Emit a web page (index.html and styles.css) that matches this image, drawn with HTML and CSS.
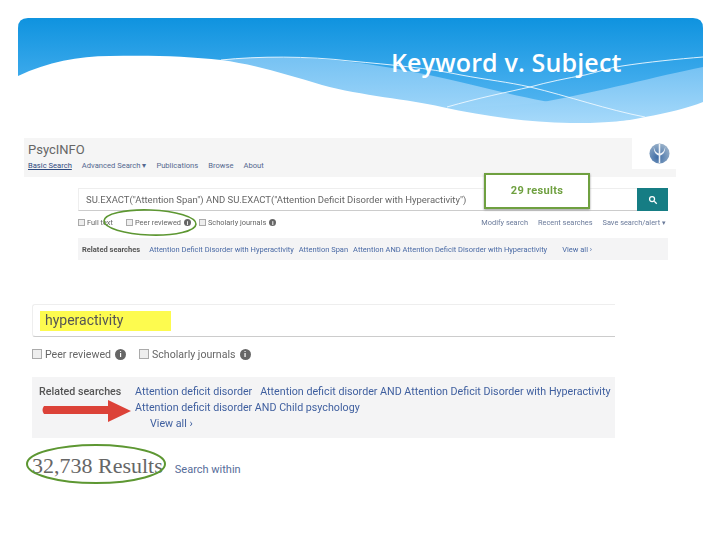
FILE: index.html
```html
<!DOCTYPE html>
<html lang="en">
<head>
  <meta charset="UTF-8" />
  <title>Keyword v. Subject</title>
  <link rel="stylesheet" href="styles.css">
</head>
<body>
  <div class="slide">

    <div class="banner">
      <svg class="banner-art" viewBox="0 0 685 105">
        <defs>
          <linearGradient id="sky" x1="0" y1="0" x2="0" y2="1">
            <stop offset="0" stop-color="#0f93df"/>
            <stop offset="0.6" stop-color="#3fabec"/>
            <stop offset="1" stop-color="#5fbaf2"/>
          </linearGradient>
          <linearGradient id="band" x1="0" y1="0" x2="0" y2="1">
            <stop offset="0" stop-color="#76c2f3"/>
            <stop offset="1" stop-color="#a6d9fa"/>
          </linearGradient>
        </defs>
        <path d="M0 10 Q0 0 10 0 H675 Q685 0 685 10 V105 H0 Z" fill="url(#sky)"/>
        <path d="M200 42 C260 36 320 40 374 50 C420 58 450 66 484 74 C530 85 590 95 627 100 V105 H200 Z" fill="url(#band)"/>
        <path d="M429 89 C460 89 495 88 525 84 C580 74 640 58 685 49 V105 H429 Z" fill="url(#band)"/>
        <path d="M0 58 C30 44 60 38 92 38 C130 37 170 38 203 42 C240 47 270 57 304 67 C344 78 390 81 424 89 C470 99 520 106 572 105 C600 104 615 102 627 99 C650 95 670 90 685 84 V105 H0 Z" fill="#fff"/>
        <path d="M203 42 C240 38 290 38 332 43 C375 47 410 50 443 57 C470 62 490 64 512 69 C550 78 590 92 627 99" fill="none" stroke="#eef8ff" stroke-width="0.9"/>
        <path d="M429 89 C460 80 490 74 512 69 C530 64 550 60 567 57 C580 54 590 50 604 48 C630 44 660 41 685 39" fill="none" stroke="#eef8ff" stroke-width="0.9"/>
      </svg>
      <h1 class="title">Keyword v. Subject</h1>
    </div>

    <div class="shot-one">
      <div class="top-bar">
        <div class="top-nav">
          <div class="brand">PsycINFO</div>
          <div class="nav-links">
            <span class="nav-active">Basic Search</span>
            <span>Advanced Search ▾</span>
            <span>Publications</span>
            <span>Browse</span>
            <span>About</span>
          </div>
        </div>
        <div class="logo-cell">
          <svg class="apa-logo" viewBox="0 0 22 22">
            <defs>
              <radialGradient id="globe" cx="0.4" cy="0.7" r="0.75">
                <stop offset="0" stop-color="#3f6da6"/>
                <stop offset="1" stop-color="#9db4cb"/>
              </radialGradient>
            </defs>
            <circle cx="11" cy="11" r="10.5" fill="url(#globe)"/>
            <path d="M10.2 1h1.6v20h-1.6z M5 4c1 4 2 6 5.2 7v2C6.500 12 5 9 5 4z M17 4c-1 4-2 6-5.200 7v2c3.700-1 5.200-4 5.200-9z" fill="#eef2f6"/>
          </svg>
        </div>
      </div>

      <div class="search-area">
        <div class="search-row">
          <div class="search-input">SU.EXACT("Attention Span") AND SU.EXACT("Attention Deficit Disorder with Hyperactivity")</div>
          <div class="search-btn">
            <svg viewBox="0 0 16 16" class="search-icon">
              <circle cx="6.5" cy="6.5" r="4" fill="none" stroke="#fff" stroke-width="2"/>
              <path d="M10 10l4 4" stroke="#fff" stroke-width="2"/>
            </svg>
          </div>
        </div>
        <div class="option-row">
          <span class="option"><i class="check"></i>Full text</span>
          <span class="option"><i class="check"></i>Peer reviewed <b class="info">i</b></span>
          <span class="option"><i class="check"></i>Scholarly journals <b class="info">i</b></span>
          <span class="option-links">
            <span>Modify search</span>
            <span>Recent searches</span>
            <span>Save search/alert ▾</span>
          </span>
        </div>
        <div class="related-row">
          <strong>Related searches</strong>
          <span>Attention Deficit Disorder with Hyperactivity</span>
          <span>Attention Span</span>
          <span>Attention AND Attention Deficit Disorder with Hyperactivity</span>
          <span class="view-all">View all ›</span>
        </div>
      </div>
    </div>

    <div class="shot-two">
      <div class="big-input"><span class="highlight">hyperactivity</span></div>
      <div class="big-options">
        <span class="option"><i class="check"></i>Peer reviewed <b class="info">i</b></span>
        <span class="option"><i class="check"></i>Scholarly journals <b class="info">i</b></span>
      </div>
      <div class="big-related">
        <strong>Related searches</strong>
        <div class="big-links">
          <div class="big-line"><span>Attention deficit disorder</span><span>Attention deficit disorder AND Attention Deficit Disorder with Hyperactivity</span></div>
          <div class="big-line"><span>Attention deficit disorder AND Child psychology</span></div>
          <div class="big-line big-view"><span>View all ›</span></div>
        </div>
      </div>
    </div>

    <div class="results-line">
      <span class="results-count">32,738 Results</span>
      <span class="results-within">Search within</span>
    </div>

    <!-- call-outs drawn on top of the screenshots -->
    <div class="results-box">29 results</div>

    <svg class="mark mark-peer" viewBox="0 0 96 29">
      <ellipse cx="48" cy="14.500" rx="46" ry="12.500" fill="none" stroke="#5d9732" stroke-width="1.600" transform="rotate(2 48 14.500)"/>
    </svg>

    <svg class="mark mark-count" viewBox="0 0 142 42">
      <ellipse cx="71" cy="21" rx="69" ry="19" fill="none" stroke="#5d9732" stroke-width="2"/>
    </svg>

    <svg class="mark mark-arrow" viewBox="0 0 92 22">
      <path d="M3 6 H67 V0 L90 11 L67 22 V14 H3 Q0 10 3 6 Z" fill="#dc4238"/>
    </svg>
  </div>
</body>
</html>
```

FILE: styles.css
```css
* {
  box-sizing: border-box;
}

body {
  margin: 0;
  background: #fff;
  font-family: 'Roboto', 'Liberation Sans', sans-serif;
  color: #555;
}

.slide {
  position: relative;
  width: 720px;
  height: 540px;
  padding-top: 18px;
  overflow: hidden;
  background: #fff;
}

/* banner */
.banner {
  position: relative;
  height: 105px;
  margin: 0 17px 0 18px;
}

.banner-art {
  display: block;
  width: 100%;
  height: 100%;
}

.title {
  position: absolute;
  top: 27px;
  left: 373px;
  margin: 0;
  font-family: 'Open Sans', 'Noto Sans', sans-serif;
  font-size: 25px;
  font-weight: 600;
  line-height: 34px;
  letter-spacing: 0.15px;
  color: #fff;
  white-space: nowrap;
}

/* first screenshot */
.shot-one {
  margin: 15px 44px 0 24px;
  height: 123px;
  filter: blur(0.35px);
}

.top-bar {
  display: flex;
  height: 39px;
  background: #f5f5f5;
}

.top-nav {
  width: 608px;
  padding: 4px 4px 0;
}

.brand {
  font-size: 13px;
  line-height: 15px;
  color: #666;
}

.nav-links {
  display: flex;
  gap: 10px;
  margin-top: 4px;
  font-size: 7.6px;
  line-height: 10px;
  color: #54688f;
}

.nav-active {
  color: #2f4a7f;
  text-decoration: underline;
}

.logo-cell {
  flex: 1;
  height: 31px;
  background: #fff;
  display: flex;
  align-items: center;
  justify-content: flex-end;
  padding-right: 6px;
}

.apa-logo {
  width: 21px;
  height: 21px;
}

.search-area {
  margin: 11px 8px 0 54px;
}

.search-row {
  display: flex;
  height: 23px;
}

.search-input {
  flex: 1;
  border: 1px solid #eee;
  border-bottom-color: #ccc;
  border-right: 0;
  padding-left: 7px;
  font-size: 9.5px;
  line-height: 22px;
  color: #666;
  white-space: nowrap;
  overflow: hidden;
}

.search-btn {
  width: 31px;
  background: #167d84;
  display: flex;
  align-items: center;
  justify-content: center;
}

.search-icon {
  width: 10px;
  height: 10px;
}

.option-row {
  display: flex;
  align-items: center;
  gap: 8px;
  height: 11px;
  margin-top: 6px;
  font-size: 7.4px;
  color: #666;
}

.option {
  display: inline-flex;
  align-items: center;
  white-space: nowrap;
}

.option-row .option:first-child {
  margin-right: 5px;
}

.check {
  width: 7px;
  height: 7px;
  margin-right: 2px;
  border: 1px solid #aaa;
  background: #eee;
}

.info {
  display: inline-block;
  width: 7px;
  height: 7px;
  margin-left: 3px;
  border-radius: 50%;
  background: #666;
  color: #fff;
  font-size: 6px;
  line-height: 7px;
  text-align: center;
}

.option-links {
  display: flex;
  gap: 10px;
  margin-left: auto;
  padding-right: 2px;
  color: #6a7a9a;
  white-space: nowrap;
}

.related-row {
  display: flex;
  align-items: center;
  gap: 5px;
  height: 22px;
  margin-top: 10px;
  padding-left: 4px;
  background: #f4f4f5;
  font-size: 7.5px;
  color: #4a6aa5;
  white-space: nowrap;
}

.related-row strong {
  margin-right: 4px;
  color: #555;
}

.view-all {
  margin-left: 10px;
}

/* second screenshot */
.shot-two {
  margin: 43px 105px 0 32px;
  filter: blur(0.3px);
}

.big-input {
  height: 33px;
  padding: 6px 0 0 7px;
  border: 1px solid #eee;
  border-bottom-color: #ccc;
  border-right: 0;
  border-radius: 3px 0 0 3px;
}

.highlight {
  display: block;
  width: 131px;
  height: 20px;
  padding-left: 5px;
  background: #fdfb4f;
  font-size: 14px;
  line-height: 19px;
  color: #555;
}

.big-options {
  display: flex;
  gap: 13px;
  height: 34px;
  margin-bottom: 6px;
  align-items: center;
  font-size: 10.6px;
  color: #666;
}

.big-options .check {
  width: 10px;
  height: 10px;
  margin-right: 3px;
}

.big-options .info {
  width: 11px;
  height: 11px;
  margin-left: 4px;
  font-size: 8px;
  line-height: 11px;
}

.big-related {
  display: flex;
  height: 61px;
  padding: 7px 0 0 7px;
  background: #f4f4f5;
  font-size: 10.7px;
  line-height: 16px;
  color: #3f5f9f;
}

.big-related strong {
  width: 96px;
  color: #555;
  font-weight: 500;
}

.big-line {
  display: flex;
  gap: 8px;
  white-space: nowrap;
}

.big-view {
  padding-left: 15px;
}

.results-line {
  display: flex;
  align-items: baseline;
  gap: 12px;
  margin: 14px 0 0 32px;
}

.results-count {
  font-family: 'Liberation Serif', serif;
  font-size: 22px;
  line-height: 28px;
  color: #666;
}

.results-within {
  font-size: 11px;
  color: #566c99;
}

/* call-outs */
.results-box {
  position: absolute;
  left: 484px;
  top: 173px;
  width: 106px;
  height: 36px;
  border: 2px solid #6fa040;
  background: #fff;
  box-shadow: 0 1px 2px #999;
  text-align: center;
  font-size: 11px;
  font-weight: 700;
  line-height: 31px;
  letter-spacing: 0.3px;
  color: #6fa040;
}

.mark {
  position: absolute;
  display: block;
}

.mark-peer {
  left: 102px;
  top: 208px;
  width: 96px;
  height: 29px;
}

.mark-count {
  left: 25px;
  top: 443px;
  width: 142px;
  height: 42px;
}

.mark-arrow {
  left: 41px;
  top: 400px;
  width: 92px;
  height: 22px;
}
```
